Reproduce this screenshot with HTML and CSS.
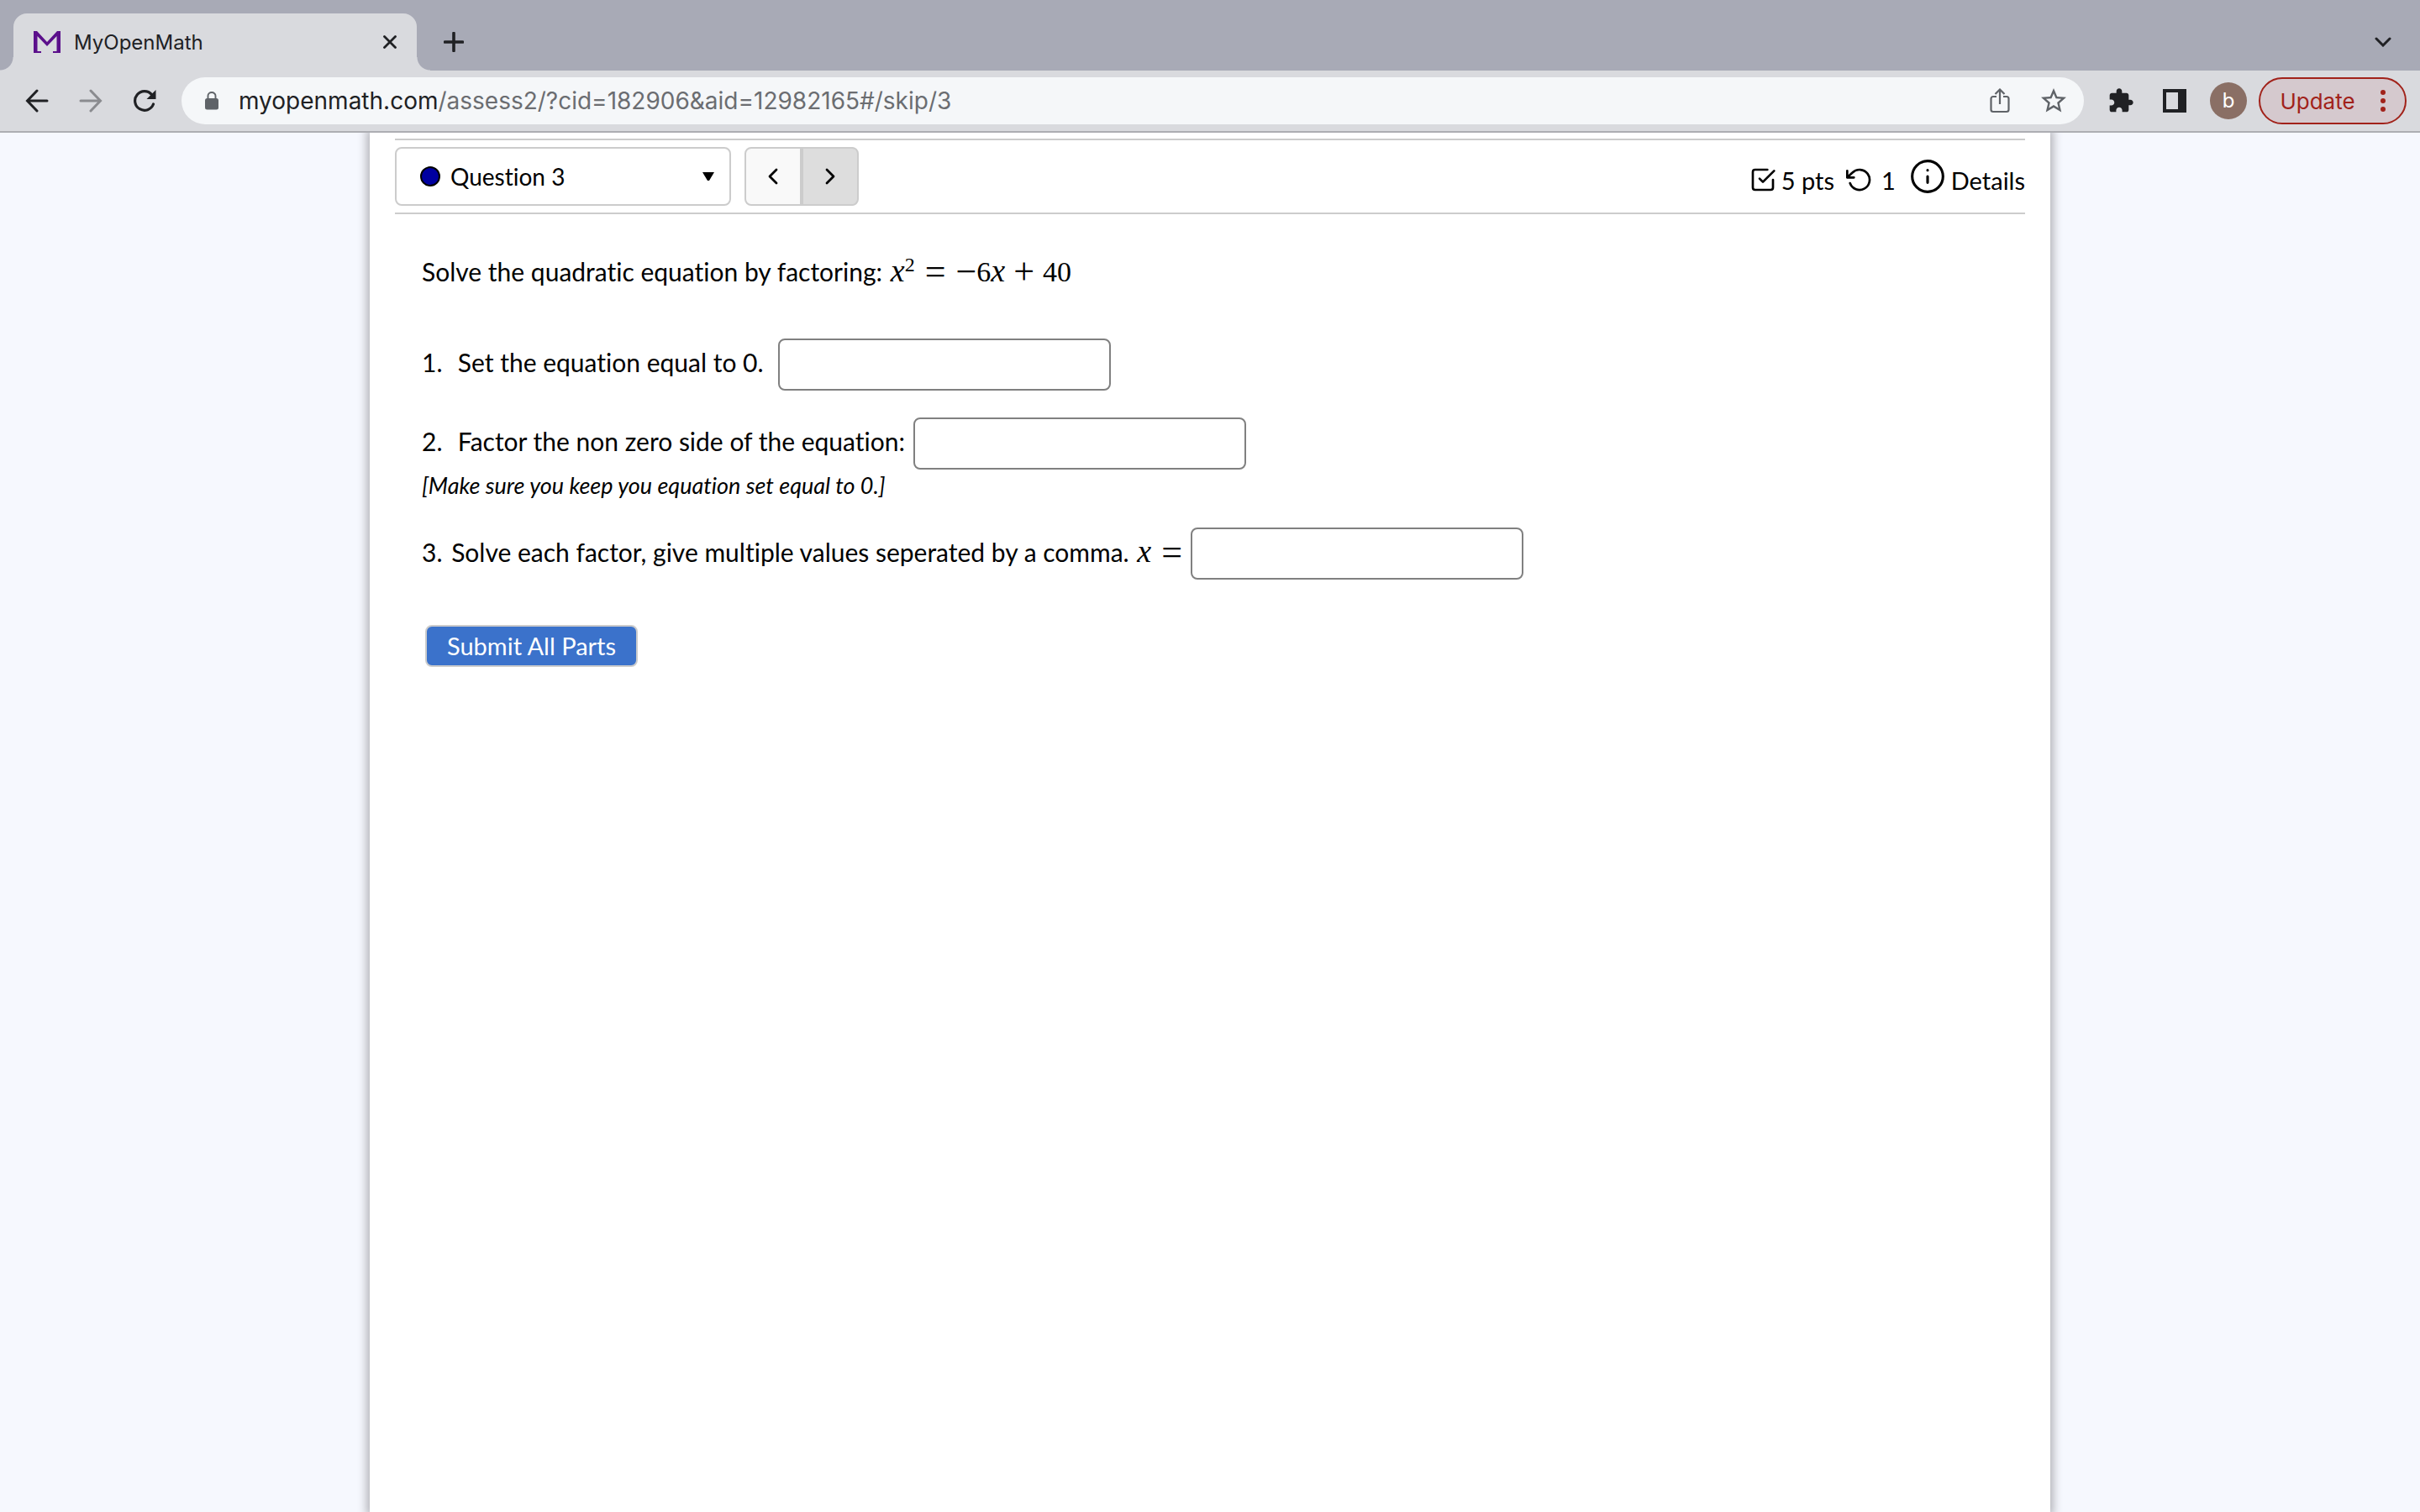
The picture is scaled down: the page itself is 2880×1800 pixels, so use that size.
FILE: index.html
```html
<!DOCTYPE html>
<html lang="en">
<head>
    <meta charset="UTF-8">
    <meta name="viewport" content="width=device-width, initial-scale=1.0">
    <title>MyOpenMath</title>
    <link rel="stylesheet" href="styles.css">
</head>
<body>
    <div class="tab-strip">
        <div class="tab">
            <svg class="favicon" width="32" height="26" viewBox="0 0 32 26"><path d="M0 0h4l12 13L28 0h4v26h-9v-2h4.500V6L16 18 4.500 6v18H9v2H0z" fill="#5b0f8b"/></svg>
            <span class="tab-title">MyOpenMath</span>
            <button class="tab-close" aria-label="Close tab">
                <svg width="16" height="16" viewBox="0 0 16 16"><path d="M1.500 1.500l13 13M14.500 1.500l-13 13" stroke="#202124" stroke-width="2.800" stroke-linecap="round"/></svg>
            </button>
        </div>
        <button class="new-tab" aria-label="New tab">
            <svg width="24" height="24" viewBox="0 0 24 24"><path d="M12 1.500v21M1.500 12h21" stroke="#202124" stroke-width="3.600" stroke-linecap="round"/></svg>
        </button>
        <button class="tab-search" aria-label="Search tabs">
            <svg width="20" height="12" viewBox="0 0 20 12"><path d="M2 2l8 8 8-8" fill="none" stroke="#202124" stroke-width="3" stroke-linecap="round"/></svg>
        </button>
    </div>

    <div class="toolbar">
        <button class="tool" aria-label="Back">
            <svg width="28" height="28" viewBox="0 0 28 28"><path d="M14 2L2.500 14 14 26M3 14h23" fill="none" stroke="#202124" stroke-width="3" stroke-linecap="round"/></svg>
        </button>
        <button class="tool" aria-label="Forward">
            <svg width="28" height="28" viewBox="0 0 28 28"><path d="M14 2l11.500 12L14 26M25 14H2" fill="none" stroke="#8a8b8f" stroke-width="3" stroke-linecap="round"/></svg>
        </button>
        <button class="tool" aria-label="Reload">
            <svg width="28" height="28" viewBox="0 0 28 28"><path d="M24.500 18A11.300 11.300 0 1 1 22.500 6.600" fill="none" stroke="#202124" stroke-width="3.200" stroke-linecap="round"/><path d="M27.500 1v11h-11z" fill="#202124"/></svg>
        </button>

        <div class="omnibox">
            <svg class="lock" width="16" height="22" viewBox="0 0 16 22"><rect y="8" width="16" height="13.500" rx="2.500" fill="#5f6368"/><path d="M3.500 9V5a4.500 4 0 0 1 9 0v4" fill="none" stroke="#5f6368" stroke-width="1.900"/></svg>
            <div class="url" role="textbox" aria-label="Address"><span class="url-host">myopenmath.com</span>/assess2/?cid=182906&amp;aid=12982165#/skip/3</div>
            <button class="tool" aria-label="Share">
                <svg width="24" height="30" viewBox="0 0 24 30"><path d="M8 10H4a2.500 2.500 0 0 0-2.500 2.500v13A2.500 2.500 0 0 0 4 28h16a2.500 2.500 0 0 0 2.500-2.500v-13A2.500 2.500 0 0 0 20 10h-4M12 19V2M6.500 7L12 1.500 17.500 7" fill="none" stroke="#5f6368" stroke-width="2.200"/></svg>
            </button>
            <button class="tool" aria-label="Bookmark this tab">
                <svg width="36" height="36" viewBox="0 0 24 24"><path d="M22 9.240l-7.190-.62L12 2 9.190 8.630 2 9.240l5.460 4.730L5.820 21 12 17.270 18.180 21l-1.630-7.030L22 9.240zM12 15.400l-3.760 2.270 1-4.280-3.320-2.880 4.380-.38L12 6.100l1.710 4.040 4.380.38-3.320 2.880 1 4.280L12 15.400z" fill="#5f6368"/></svg>
            </button>
        </div>

        <button class="tool" aria-label="Extensions">
            <svg width="32" height="32" viewBox="0 0 24 24"><path d="M20.500 11H19V7c0-1.100-.9-2-2-2h-4V3.500C13 2.120 11.880 1 10.500 1S8 2.120 8 3.500V5H4c-1.100 0-1.990.9-1.990 2v3.800H3.500c1.490 0 2.700 1.210 2.700 2.700s-1.210 2.700-2.700 2.700H2V20c0 1.100.9 2 2 2h3.800v-1.500c0-1.490 1.210-2.700 2.700-2.700s2.700 1.210 2.700 2.700V22H17c1.100 0 2-.9 2-2v-4h1.500c1.380 0 2.500-1.120 2.500-2.500S21.880 11 20.500 11z" fill="#202124"/></svg>
        </button>
        <button class="tool" aria-label="Side panel">
            <svg width="28" height="28" viewBox="0 0 28 28"><path fill-rule="evenodd" d="M0 0h28v28H0zM4 4v20h14V4z" fill="#202124"/></svg>
        </button>
        <button class="tool" aria-label="Profile"><span class="avatar">b</span></button>
        <button class="update">Update
            <svg width="6" height="28" viewBox="0 0 6 28"><g fill="#a1221a"><circle cx="3" cy="4" r="3"/><circle cx="3" cy="14" r="3"/><circle cx="3" cy="24" r="3"/></g></svg>
        </button>
    </div>

    <main class="page">
        <div class="question-bar">
            <button class="question-select">
                <svg width="24" height="24" viewBox="0 0 24 24"><circle cx="12" cy="12" r="11" fill="#0000a0" stroke="#000" stroke-width="2"/></svg>
                <span>Question 3</span>
                <svg class="caret" width="14" height="10" viewBox="0 0 14 10"><path d="M0 0h14L8 10H6z"/></svg>
            </button>
            <div class="pager">
                <button class="prev" aria-label="Previous question">
                    <svg width="12" height="20" viewBox="0 0 12 20"><path d="M10 2l-8 8 8 8" fill="none" stroke="#000" stroke-width="2.800" stroke-linecap="round" stroke-linejoin="round"/></svg>
                </button>
                <button class="next" aria-label="Next question">
                    <svg width="12" height="20" viewBox="0 0 12 20"><path d="M2 2l8 8-8 8" fill="none" stroke="#000" stroke-width="2.800" stroke-linecap="round" stroke-linejoin="round"/></svg>
                </button>
            </div>
            <div class="details">
                <svg class="small-icon" width="32" height="32" viewBox="0 0 24 24"><path d="M9 11l3 3L22 4M21 12v7a2 2 0 0 1-2 2H5a2 2 0 0 1-2-2V5a2 2 0 0 1 2-2h11"/></svg>
                <span class="points">5 pts</span>
                <svg class="small-icon" width="32" height="32" viewBox="0 0 24 24"><path d="M1 4v6h6M3.510 15a9 9 0 1 0 2.130-9.360L1 10"/></svg>
                <span class="tries">1</span>
                <button class="info">
                    <svg width="44" height="44" viewBox="0 0 24 24"><circle cx="12" cy="12" r="10"/><path d="M12 16v-4M12 8h.01"/></svg>
                    <span>Details</span>
                </button>
            </div>
        </div>

        <form class="question">
            <p class="prompt">Solve the quadratic equation by factoring: <span class="math"><i>x</i><sup>2</sup><span class="sign rel">=</span><span class="sign">−</span>6<i>x</i><span class="sign op">+</span>40</span></p>

            <p class="part first"><label for="part1"><span class="number">1.&nbsp;</span> Set the equation equal to 0.&nbsp;</label> <input type="text" id="part1"></p>

            <p class="part"><label for="part2"><span class="number">2.&nbsp;</span> Factor the non zero side of the equation:</label> <input type="text" id="part2"></p>
            <p class="hint">[Make sure you keep you equation set equal to 0.]</p>

            <p class="part"><label for="part3"><span class="number">3.</span> Solve each factor, give multiple values seperated by a comma. <span class="math"><i>x</i><span class="sign rel last">=</span></span></label> <input type="text" id="part3"></p>

            <button type="button" class="submit">Submit All Parts</button>
        </form>
    </main>
</body>
</html>
```

FILE: styles.css
```css
* {
    box-sizing: border-box;
}

body {
    margin: 0;
    min-height: 100vh;
    display: flex;
    flex-direction: column;
    background-color: #f6f8fe;
    font-family: Lato, "Trebuchet MS", sans-serif;
    font-size: 30px;
    font-variant-ligatures: none;
    color: #000;
}

button {
    display: flex;
    align-items: center;
    justify-content: center;
    margin: 0;
    padding: 0;
    border: none;
    background: none;
    font: inherit;
    color: inherit;
    cursor: pointer;
}

svg {
    flex: none;
}

/* browser chrome */
.tab-strip {
    display: flex;
    align-items: center;
    height: 84px;
    padding: 16px 24px 0 16px;
    background-color: #a8aab6;
    font-family: Inter, sans-serif;
}

.tab {
    position: relative;
    display: flex;
    align-items: center;
    width: 480px;
    height: 68px;
    padding: 0 24px 0 24px;
    border-radius: 16px 16px 0 0;
    background-color: #d9dade;
}

.tab::before,
.tab::after {
    content: "";
    position: absolute;
    bottom: 0;
    width: 16px;
    height: 16px;
}

.tab::before {
    left: -16px;
    background: radial-gradient(circle at 0 0, transparent 15px, #d9dade 16px);
}

.tab::after {
    right: -16px;
    background: radial-gradient(circle at 100% 0, transparent 15px, #d9dade 16px);
}

.tab-title {
    margin-left: 16px;
    font-size: 24px;
    color: #202124;
}

.tab-close {
    margin-left: auto;
}

.new-tab {
    margin-left: 32px;
}

.tab-search {
    width: 40px;
    margin-left: auto;
}

.toolbar {
    display: flex;
    align-items: center;
    gap: 8px;
    height: 74px;
    padding: 0 16px;
    border-bottom: 2px solid #adaeb3;
    background-color: #d9dade;
    font-family: Inter, sans-serif;
}

.tool {
    flex: none;
    width: 56px;
    height: 56px;
}

.omnibox {
    flex: 1;
    display: flex;
    align-items: center;
    gap: 8px;
    height: 56px;
    margin: 0 8px;
    padding: 0 8px 0 28px;
    border-radius: 28px;
    background-color: #f5f7f9;
}

.url {
    flex: 1;
    margin-left: 16px;
    font-size: 28px;
    color: #6b6d71;
}

.url-host {
    color: #202124;
}

.avatar {
    width: 44px;
    height: 44px;
    border-radius: 50%;
    background-color: #8a6f65;
    color: #fff;
    font-size: 24px;
    line-height: 44px;
}

.update {
    gap: 30px;
    width: 176px;
    height: 56px;
    border: 2px solid #a1221a;
    border-radius: 28px;
    background-color: #d5c9ce;
    font-size: 26px;
    color: #a1221a;
}

/* assessment page */
.page {
    flex: 1;
    width: 100%;
    max-width: 2000px;
    margin: 0 auto;
    padding: 7px 30px 0;
    background-color: #fff;
    box-shadow: 0 0 10px 4px #b4b4ba;
    clip-path: inset(0 -20px);
}

.question-bar {
    display: flex;
    align-items: center;
    height: 90px;
    border-top: 2px solid #ccc;
    border-bottom: 2px solid #ccc;
}

.question-select {
    width: 400px;
    height: 70px;
    padding: 0 18px 0 28px;
    gap: 12px;
    border: 2px solid #ccc;
    border-radius: 8px;
    background-color: #fff;
    font-size: 28px;
}

.caret {
    margin-left: auto;
}

.pager {
    display: flex;
    margin-left: 16px;
}

.pager button {
    width: 68px;
    height: 70px;
    border: 2px solid #ccc;
}

.pager .prev {
    border-radius: 8px 0 0 8px;
    background-color: #f9f9f9;
}

.pager .next {
    border-radius: 0 8px 8px 0;
    background-color: #ddd;
}

.details {
    display: flex;
    align-items: center;
    margin-left: auto;
    font-size: 29px;
}

.details svg {
    fill: none;
    stroke: #000;
    stroke-width: 2;
    stroke-linecap: round;
    stroke-linejoin: round;
}

.details .small-icon {
    margin-top: 8px;
}

.details span {
    padding-top: 8px;
}

.details .info svg {
    stroke-width: 1.700;
}

.points {
    margin: 0 14px 0 6px;
}

.tries {
    margin: 0 16px 0 10px;
}

.info {
    gap: 6px;
}

.question {
    padding: 38px 32px;
}

.question p {
    margin: 0;
}

.prompt {
    line-height: 60px;
}

.part {
    display: flex;
    align-items: center;
    gap: 10px;
    height: 62px;
}

.part label {
    padding-bottom: 6px;
}

.number {
    margin-right: 3px;
}

.question .part {
    margin-bottom: 32px;
}

.question .first {
    margin-top: 50px;
}

.part input {
    width: 396px;
    height: 62px;
    padding: 8px;
    border: 2px solid #808080;
    border-radius: 8px;
    background-color: #fff;
    font: inherit;
}

.question .hint {
    margin: -38px 0 25px;
    font-size: 27px;
    line-height: 50px;
    font-style: italic;
}

.math {
    margin-left: 2px;
    font-family: "Liberation Serif", serif;
    font-size: 34px;
    line-height: 1;
}

.math i {
    font-size: 38px;
}

.math sup {
    font-size: 24px;
    line-height: 1;
}

.sign {
    font-size: 44px;
    line-height: 34px;
    vertical-align: -3px;
}

.rel {
    margin: 0 12px;
}

.rel.last {
    margin-right: 0;
}

.op {
    margin: 0 10px;
}

.submit {
    height: 50px;
    margin: 54px 0 0 4px;
    padding: 0 24px 2px;
    border: 2px solid #ccc;
    border-radius: 8px;
    background-color: #3b72cb;
    font-size: 29px;
    color: #fff;
}
```
